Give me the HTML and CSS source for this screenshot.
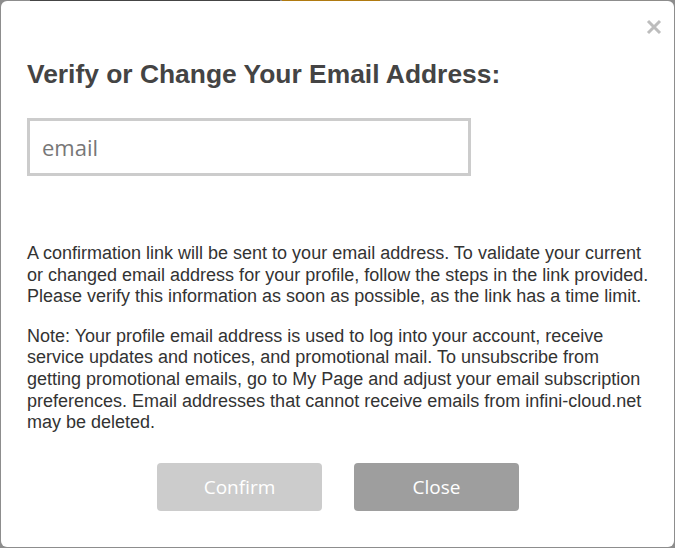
FILE: index.html
```html
<!DOCTYPE html>
<html>
<head>
<meta charset="utf-8">
<link rel="stylesheet" href="styles.css">
</head>
<body>
<div class="backdrop-strip"><span class="bg-text"></span><span class="bg-orange"></span></div>
<div class="modal">
  <button class="close-x" aria-label="close">
    <svg width="16" height="16" viewBox="0 0 16 16"><path d="M2 2 L14 14 M14 2 L2 14" stroke="#bdbdbd" stroke-width="3" fill="none"/></svg>
  </button>
  <h2 class="title">Verify or Change Your Email Address:</h2>
  <div class="field"><input class="email" type="text" placeholder="email"></div>
  <p class="info">A confirmation link will be sent to your email address. To validate your current or changed email address for your profile, follow the steps in the link provided. Please verify this information as soon as possible, as the link has a time limit.</p>
  <p class="info">Note: Your profile email address is used to log into your account, receive service updates and notices, and promotional mail. To unsubscribe from getting promotional emails, go to My Page and adjust your email subscription preferences. Email addresses that cannot receive emails from infini-cloud.net may be deleted.</p>
  <div class="actions">
    <button class="btn btn-confirm">Confirm</button>
    <button class="btn btn-close">Close</button>
  </div>
</div>
</body>
</html>
```
FILE: styles.css
```css
html, body {
  margin: 0;
  padding: 0;
}
body {
  background: #8d8d8d;
  width: 675px;
  height: 548px;
  overflow: hidden;
  position: relative;
}
.backdrop-strip {
  position: absolute;
  top: 0;
  left: 0;
  width: 675px;
  height: 3px;
}
.bg-text {
  position: absolute;
  left: 30px;
  top: 0;
  width: 250px;
  height: 2px;
  background: #444;
}
.bg-orange {
  position: absolute;
  left: 282px;
  top: 0;
  width: 98px;
  height: 3px;
  background: #b07a10;
}
.modal {
  position: relative;
  margin: 1px 1px 0 1px;
  height: 546px;
  background: #fff;
  border-radius: 6px;
  padding: 0 18px 0 26px;
  box-sizing: border-box;
  font-family: "Liberation Sans", Arial, sans-serif;
  color: #333;
}
.close-x {
  position: absolute;
  top: 18px;
  right: 12px;
  border: 0;
  background: none;
  padding: 0;
  width: 16px;
  height: 16px;
  cursor: pointer;
}
.close-x svg { display: block; }
.title {
  margin: 0;
  padding-top: 57px;
  font-size: 26.4px;
  line-height: 32px;
  font-weight: bold;
  color: #444;
}
.field {
  margin-top: 28px;
}
.email {
  display: block;
  box-sizing: border-box;
  width: 444px;
  height: 58px;
  border: 3px solid #cccccc;
  padding: 0 12px;
  font-family: "Open Sans", sans-serif;
  font-size: 22px;
  color: #333;
  outline: none;
  margin: 0;
}
.email::placeholder {
  color: #777;
}
.info {
  margin: 0 0 18px 0;
  font-size: 18px;
  line-height: 21.6px;
  color: #333;
}
.field + .info {
  margin-top: 67px;
}
.actions {
  display: flex;
  justify-content: center;
  gap: 32px;
  margin: 29px 7px 0 0;
}
.btn {
  width: 165px;
  height: 48px;
  border: 0;
  border-radius: 4px;
  color: #fff;
  font-family: "Open Sans", sans-serif;
  font-size: 19px;
  cursor: pointer;
}
.btn-confirm { background: #cccccc; }
.btn-close { background: #9e9e9e; }
```
